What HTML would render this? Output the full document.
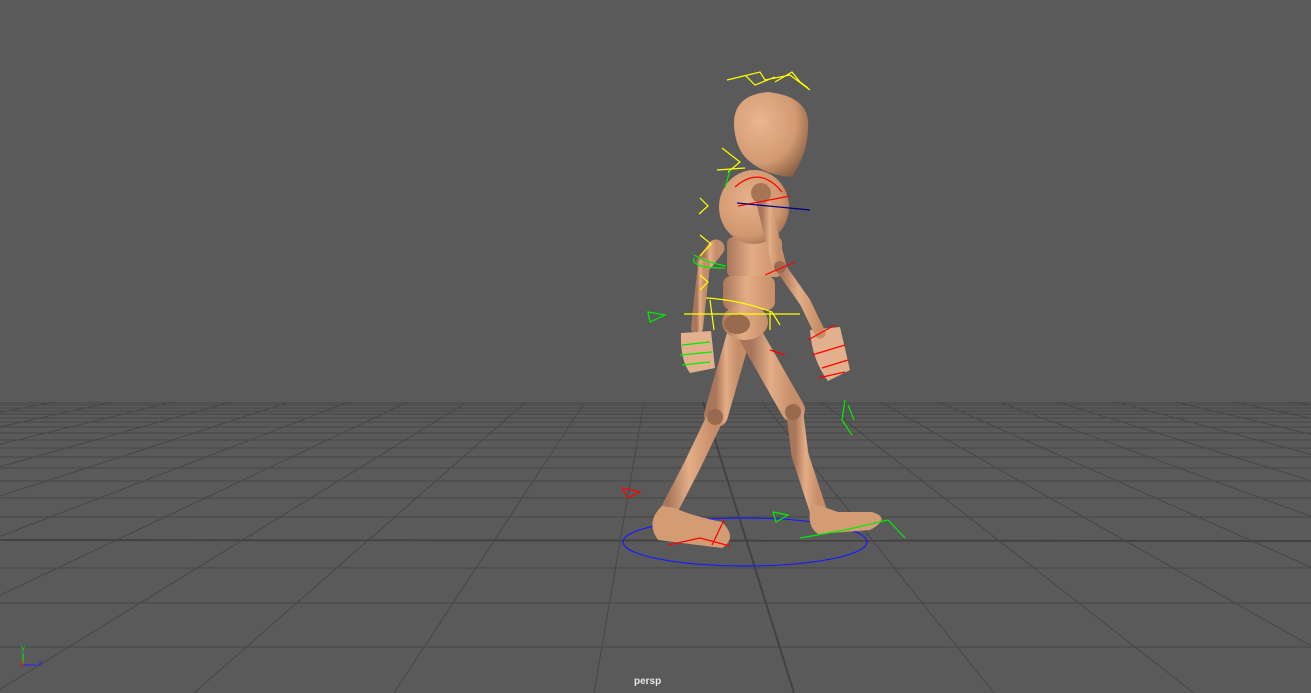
<!DOCTYPE html>
<html><head><meta charset="utf-8"><style>
html,body{margin:0;padding:0;width:1311px;height:693px;overflow:hidden;background:#5a5a5a}
svg{position:absolute;left:0;top:0}
.t{position:absolute;font-family:"Liberation Sans",sans-serif;font-weight:bold;font-size:10px;color:#e8e8e8}
</style></head><body>
<svg width="1311" height="693" viewBox="0 0 1311 693">
<defs>
<linearGradient id="sk" x1="0" y1="0" x2="1" y2="0"><stop offset="0" stop-color="#a8765a"/><stop offset=".45" stop-color="#e3ad86"/><stop offset="1" stop-color="#c68e68"/></linearGradient>
<radialGradient id="hd" cx=".35" cy=".35" r=".75"><stop offset="0" stop-color="#e9b690"/><stop offset=".65" stop-color="#d29a72"/><stop offset="1" stop-color="#8a5f45"/></radialGradient>
<radialGradient id="bd" cx=".4" cy=".4" r=".7"><stop offset="0" stop-color="#e5b08a"/><stop offset=".7" stop-color="#d09870"/><stop offset="1" stop-color="#9a6a4e"/></radialGradient>
<clipPath id="g"><rect x="0" y="402" width="1311" height="291"/></clipPath>
</defs>
<g clip-path="url(#g)" stroke="#474747" stroke-width="1" fill="none">
<line x1="0" y1="403" x2="1311" y2="403"/><line x1="0" y1="405" x2="1311" y2="405"/><line x1="0" y1="408" x2="1311" y2="408"/><line x1="0" y1="411" x2="1311" y2="411"/><line x1="0" y1="414" x2="1311" y2="414"/><line x1="0" y1="418" x2="1311" y2="418"/><line x1="0" y1="422" x2="1311" y2="422"/><line x1="0" y1="427" x2="1311" y2="427"/><line x1="0" y1="433" x2="1311" y2="433"/><line x1="0" y1="440" x2="1311" y2="440"/><line x1="0" y1="448" x2="1311" y2="448"/><line x1="0" y1="457" x2="1311" y2="457"/><line x1="0" y1="468" x2="1311" y2="468"/><line x1="0" y1="481" x2="1311" y2="481"/><line x1="0" y1="498" x2="1311" y2="498"/><line x1="0" y1="517" x2="1311" y2="517"/><line x1="0" y1="568" x2="1311" y2="568"/><line x1="0" y1="603" x2="1311" y2="603"/><line x1="0" y1="647" x2="1311" y2="647"/>
<line x1="0" y1="540" x2="1311" y2="541" stroke-width="2" stroke="#424242"/>
<line x1="665" y1="280" x2="794" y2="693" stroke-width="2" stroke="#424242"/>
<g id="r">
<line x1="665" y1="280" x2="994" y2="693"/><line x1="665" y1="280" x2="1194" y2="693"/><line x1="665" y1="280" x2="1394" y2="693"/><line x1="665" y1="280" x2="1594" y2="693"/><line x1="665" y1="280" x2="1794" y2="693"/><line x1="665" y1="280" x2="1994" y2="693"/><line x1="665" y1="280" x2="2194" y2="693"/><line x1="665" y1="280" x2="2394" y2="693"/><line x1="665" y1="280" x2="2594" y2="693"/><line x1="665" y1="280" x2="2794" y2="693"/><line x1="665" y1="280" x2="2994" y2="693"/><line x1="665" y1="280" x2="3194" y2="693"/><line x1="665" y1="280" x2="3394" y2="693"/>
<line x1="665" y1="280" x2="594" y2="693"/><line x1="665" y1="280" x2="394" y2="693"/><line x1="665" y1="280" x2="194" y2="693"/><line x1="665" y1="280" x2="-6" y2="693"/><line x1="665" y1="280" x2="-206" y2="693"/><line x1="665" y1="280" x2="-406" y2="693"/><line x1="665" y1="280" x2="-606" y2="693"/><line x1="665" y1="280" x2="-806" y2="693"/><line x1="665" y1="280" x2="-1006" y2="693"/><line x1="665" y1="280" x2="-1206" y2="693"/><line x1="665" y1="280" x2="-1406" y2="693"/><line x1="665" y1="280" x2="-1606" y2="693"/><line x1="665" y1="280" x2="-1806" y2="693"/>
</g>
</g>
<ellipse cx="745" cy="542" rx="122" ry="24" fill="none" stroke="#1a1aff" stroke-width="1.2"/>
<g stroke-linecap="round" fill="none" stroke="url(#sk)">
<path d="M716 248 L705 262" stroke-width="17"/>
<path d="M704 264 L697 328" stroke-width="12"/>
<path d="M738 338 L716 415" stroke-width="24"/>
<path d="M714 420 L692 466 L668 512" stroke-width="17"/>
<path d="M752 338 L793 410" stroke-width="24"/>
<path d="M795 415 L800 455 L818 510" stroke-width="17"/>
</g>
<circle cx="715" cy="417" r="8" fill="#9a6a4e"/>
<circle cx="793" cy="412" r="8" fill="#9a6a4e"/>
<path d="M662 506 Q645 522 658 540 L722 548 Q738 538 722 522 Q692 516 675 508Z" fill="#d49c74"/>
<path d="M812 503 Q805 525 818 534 L870 530 Q892 518 872 512 L838 512Z" fill="#d49c74"/>
<path d="M681 333 L711 331 L715 368 L690 373 Q680 360 681 333Z" fill="#e2b08c"/>
<path d="M810 330 L840 327 L850 370 L828 381 Q812 360 810 330Z" fill="#e2b08c"/>
<rect x="727" y="237" width="55" height="40" rx="6" fill="url(#sk)"/>
<rect x="723" y="276" width="52" height="34" rx="8" fill="url(#sk)"/>
<ellipse cx="745" cy="322" rx="23" ry="18" fill="url(#sk)"/>
<ellipse cx="737" cy="324" rx="13" ry="10" fill="#9a6a4e"/>
<ellipse cx="754" cy="207" rx="35" ry="37" fill="url(#bd)"/>
<g stroke-linecap="round" fill="none" stroke="url(#sk)">
<path d="M762 197 L779 265" stroke-width="14"/>
<path d="M781 268 L805 302 L820 333" stroke-width="11"/>
</g>
<circle cx="761" cy="193" r="10" fill="#a77456"/>
<circle cx="780" cy="267" r="6" fill="#9a6a4e"/>
<path d="M734 125 Q733 95 768 92 Q805 96 808 120 Q810 150 792 177 Q762 175 745 157 Q735 145 734 125Z" fill="url(#hd)"/>
<g fill="none" stroke-width="1.2">
<path d="M727 80 L760 72 L765 80 L790 75 L810 90 M745 75 L755 85 L775 77 M775 82 L792 72 L800 82 L808 88" stroke="#ffff00"/>
<path d="M722 148 L740 162 L728 172 M717 170 L745 168" stroke="#ffff00"/>
<path d="M700 198 L708 206 L699 214 M700 235 L711 244 L700 256 M700 275 L708 282 L700 290" stroke="#ffff00"/>
<path d="M684 314 L800 314 M706 298 Q740 300 772 312 L780 325 M710 300 L714 330 M770 312 L770 330" stroke="#ffff00"/>
<path d="M730 170 L725 188 M694 255 Q705 262 726 266 M694 258 Q690 268 725 268" stroke="#00ee00"/>
<path d="M735 187 Q760 165 782 192 M738 206 L790 196 M765 275 L795 262 M808 340 L835 325 M812 355 L845 345 M822 368 L848 360 M818 378 L845 372" stroke="#ff0000"/>
<path d="M737 203 L810 210" stroke="#000088"/>
<path d="M682 345 L710 342 M680 355 L712 352 M682 365 L710 362" stroke="#00ee00"/>
<path d="M648 312 L665 315 L650 322 Z M773 512 L788 515 L776 522Z M800 538 L845 530 L888 520 L905 538" stroke="#00ee00"/>
<path d="M845 400 L842 420 L852 435 M848 405 L854 420" stroke="#00ee00"/>
<path d="M622 488 L640 492 L628 498Z M770 350 L785 355 M668 545 L700 538 L730 546 M712 545 L724 520" stroke="#ff0000"/>
</g>
<line x1="23" y1="653" x2="23" y2="665" stroke="#00ee00"/>
<line x1="23" y1="665" x2="37" y2="665" stroke="#2222ff"/>
<text x="21" y="650" fill="#00ee00" font-family="Liberation Sans" font-size="8">y</text>
<text x="38" y="666" fill="#2222ff" font-family="Liberation Sans" font-size="8">z</text>
<text x="20" y="666" fill="#ff0000" font-family="Liberation Sans" font-size="8">x</text>
</svg>
<div class="t" style="left:634px;top:676px">persp</div>
</body></html>
